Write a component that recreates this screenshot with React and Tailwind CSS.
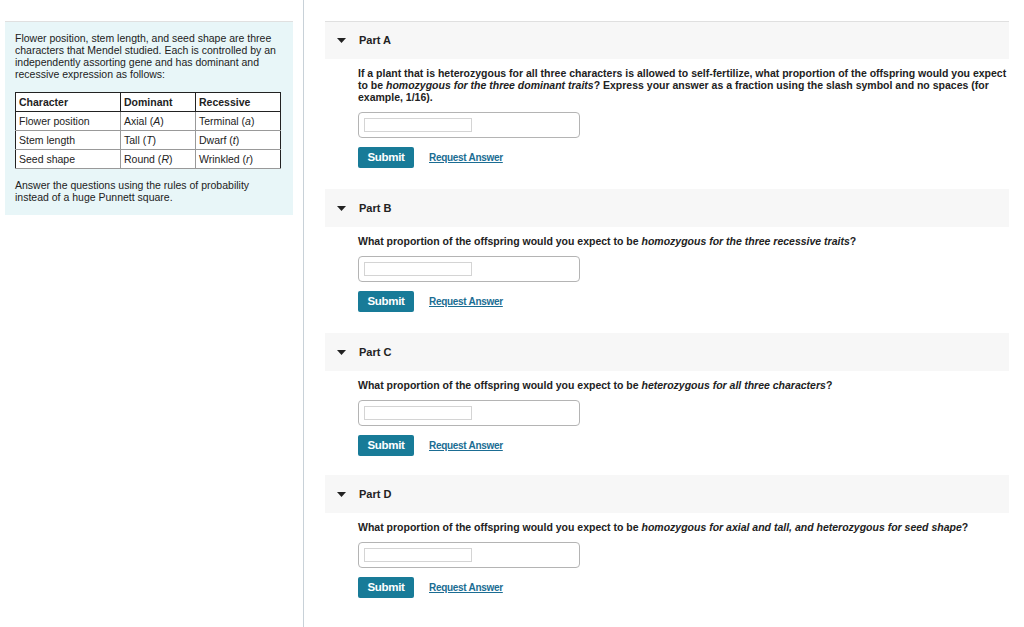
import React from 'react'

const rows = [
  ['Flower position', 'Axial', 'A', 'Terminal', 'a'],
  ['Stem length', 'Tall', 'T', 'Dwarf', 't'],
  ['Seed shape', 'Round', 'R', 'Wrinkled', 'r'],
]

const parts = [
  {
    label: 'Part A',
    gap: 'mb-[21px]',
    question: (
      <>
        If a plant that is heterozygous for all three characters is allowed to self-fertilize, what proportion of the offspring would you expect
        <br />
        to be <i>homozygous for the three dominant traits</i>? Express your answer as a fraction using the slash symbol and no spaces (for
        <br />
        example, 1/16).
      </>
    ),
  },
  {
    label: 'Part B',
    gap: 'mb-[21px]',
    question: (
      <>
        What proportion of the offspring would you expect to be <i>homozygous for the three recessive traits</i>?
      </>
    ),
  },
  {
    label: 'Part C',
    gap: 'mb-[19px]',
    question: (
      <>
        What proportion of the offspring would you expect to be <i>heterozygous for all three characters</i>?
      </>
    ),
  },
  {
    label: 'Part D',
    gap: 'mb-[21px]',
    question: (
      <>
        What proportion of the offspring would you expect to be <i>homozygous for axial and tall, and heterozygous for seed shape</i>?
      </>
    ),
  },
]

function Part({ label, question, first, gap }) {
  return (
    <div className={gap}>
      <div className={`h-[38px] bg-[#f7f7f7] flex items-center ${first ? 'border-t border-[#e0e0e0]' : ''}`}>
        <svg width="9" height="5" viewBox="0 0 9 5" className="ml-[12px] mr-[13px]">
          <path d="M0 0 L9 0 L4.5 5 Z" fill="#222" />
        </svg>
        <span className="text-[11px] font-bold text-[#222]">{label}</span>
      </div>
      <div className="pl-[33px] pt-[8px]">
        <p className="text-[10.5px] leading-[12px] font-bold text-[#222] whitespace-nowrap">{question}</p>
        <div className="mt-[9px] w-[222px] h-[26px] border border-[#b4b4b4] rounded-[4px] p-[5px] bg-white">
          <div className="w-[108px] h-[14px] border border-[#d4d4d4] bg-white" />
        </div>
        <div className="mt-[9px] flex items-center">
          <button className="w-[56px] h-[21px] bg-[#187b98] rounded-[2px] text-white text-[11.5px] font-bold tracking-[-0.3px]">
            Submit
          </button>
          <a className="ml-[15px] text-[10px] font-bold text-[#1b6d93] underline tracking-[-0.3px]">Request Answer</a>
        </div>
      </div>
    </div>
  )
}

export default function App() {
  return (
    <div className="flex min-h-[627px] bg-white font-['Liberation_Sans',Arial,sans-serif]">
      <div className="w-[304px] shrink-0 border-r border-[#c8d1d8] pt-[21px] pl-[5px]">
        <div className="w-[288px] border-t border-[#e0e0e0] bg-[#e8f6f8] pl-[10px] pr-[6px] pt-[10px] pb-[12px] text-[10.5px] leading-[12px] text-[#222]">
          <p className="whitespace-nowrap">
            Flower position, stem length, and seed shape are three
            <br />
            characters that Mendel studied. Each is controlled by an
            <br />
            independently assorting gene and has dominant and
            <br />
            recessive expression as follows:
          </p>
          <table className="mt-[12px] w-[266px] border border-[#222] border-collapse bg-white text-[10.5px]">
            <thead>
              <tr className="h-[19px]">
                <th className="w-[105px] text-left font-bold px-[3px] border border-[#222]">Character</th>
                <th className="w-[75px] text-left font-bold px-[3px] border border-[#222]">Dominant</th>
                <th className="text-left font-bold px-[3px] border border-[#222]">Recessive</th>
              </tr>
            </thead>
            <tbody>
              {rows.map(r => (
                <tr key={r[0]} className="h-[19px]">
                  <td className="px-[3px] border border-[#999] border-l-[#222]">{r[0]}</td>
                  <td className="px-[3px] border border-[#999] border-l-[#222]">
                    {r[1]} (<i>{r[2]}</i>)
                  </td>
                  <td className="px-[3px] border border-[#999] border-l-[#222] border-r-[#222]">
                    {r[3]} (<i>{r[4]}</i>)
                  </td>
                </tr>
              ))}
            </tbody>
          </table>
          <p className="mt-[10px]">
            Answer the questions using the rules of probability
            <br />
            instead of a huge Punnett square.
          </p>
        </div>
      </div>
      <div className="w-[705px] pl-[21px] pt-[21px]">
        {parts.map((p, i) => (
          <Part key={p.label} {...p} first={i === 0} />
        ))}
      </div>
    </div>
  )
}
